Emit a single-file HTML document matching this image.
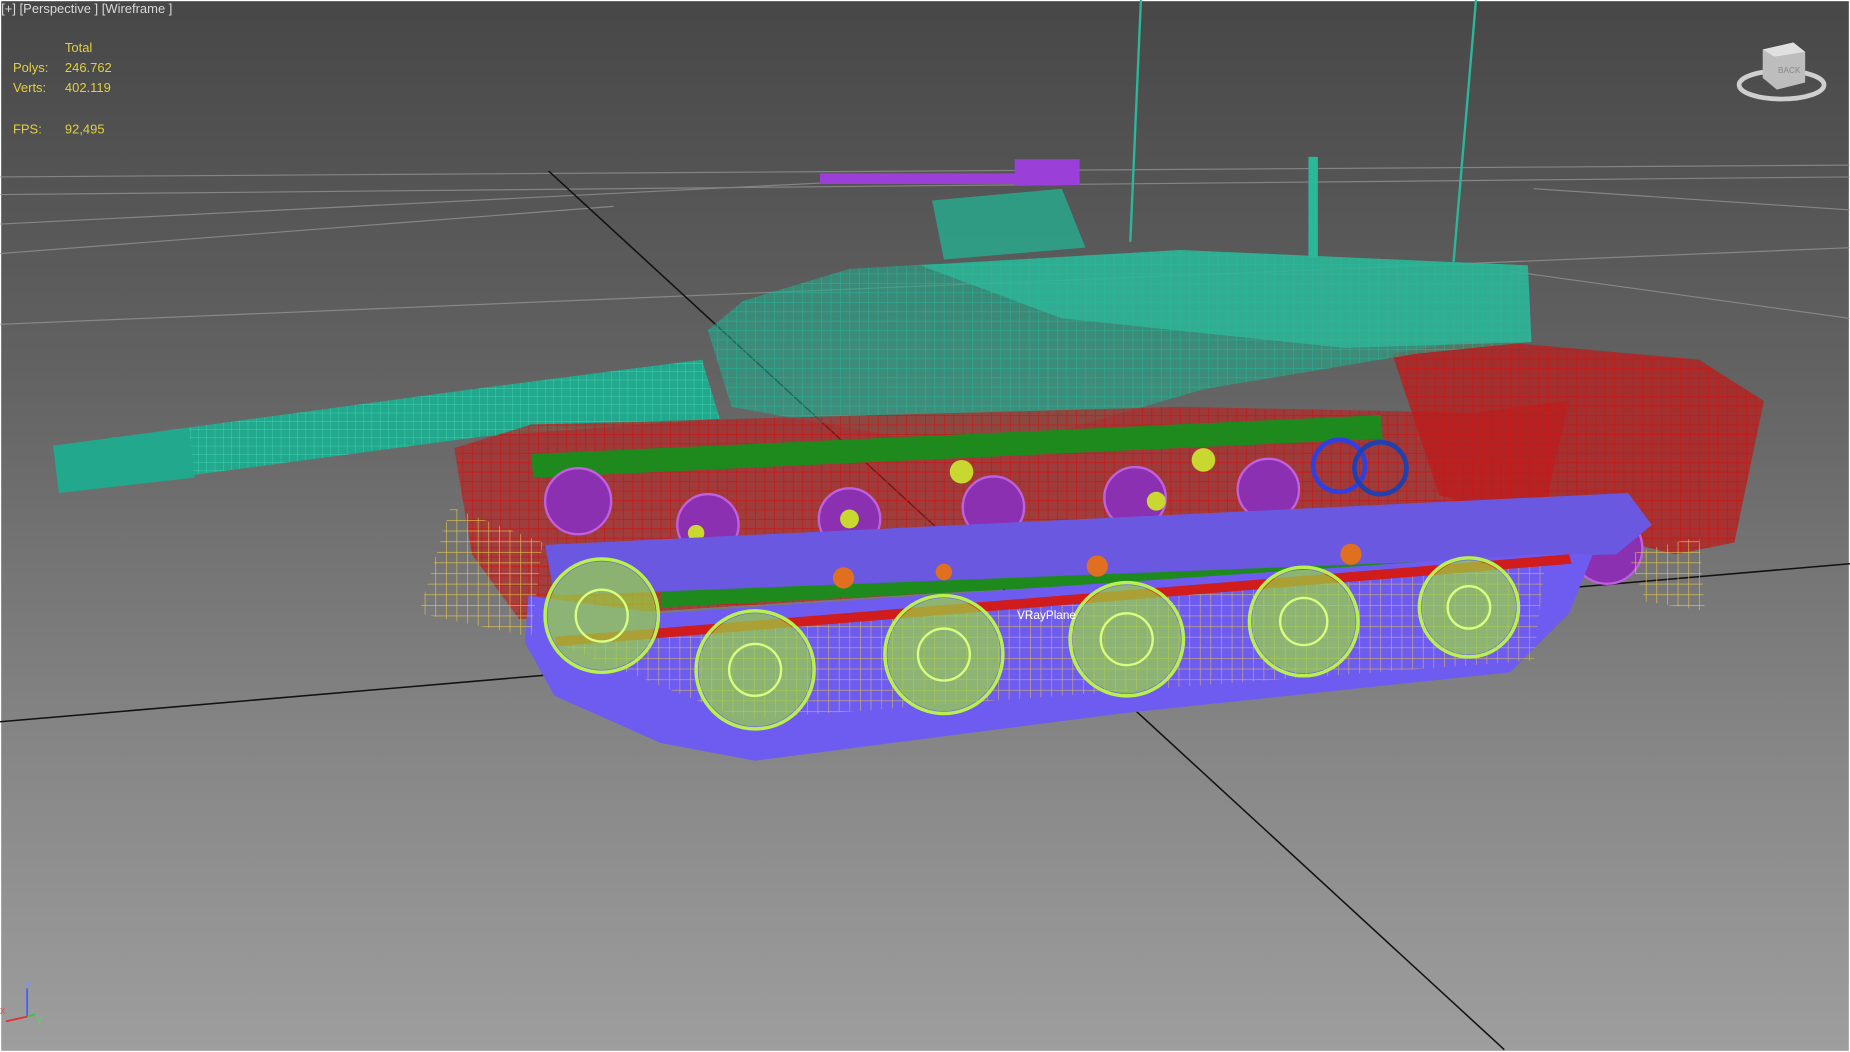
<!DOCTYPE html>
<html><head><meta charset="utf-8"><style>
html,body{margin:0;padding:0;width:1850px;height:1052px;overflow:hidden;background:#6a6a6a}
svg{display:block}
text{font-family:"Liberation Sans",sans-serif}
</style></head><body>
<svg width="1850" height="1052" viewBox="0 0 1568 892" preserveAspectRatio="none" xmlns="http://www.w3.org/2000/svg">
<defs>
<linearGradient id="bg" x1="0" y1="0" x2="0" y2="1">
<stop offset="0" stop-color="#474747"/><stop offset="0.35" stop-color="#626262"/><stop offset="0.7" stop-color="#858585"/><stop offset="1" stop-color="#9e9e9e"/>
</linearGradient>
<pattern id="mesh" width="9" height="9" patternUnits="userSpaceOnUse"><path d="M0 0H9M0 0V9" stroke="#e8c84a" stroke-width="1" fill="none"/></pattern>
<pattern id="tmesh" width="7" height="7" patternUnits="userSpaceOnUse"><rect width="7" height="7" fill="#22a88c"/><path d="M0 0H7M0 0V7" stroke="#40d0b0" stroke-width="0.8"/></pattern>
<pattern id="rmesh" width="8" height="8" patternUnits="userSpaceOnUse"><path d="M0 0H8M0 0V8" stroke="#c81818" stroke-width="1.2" fill="none"/></pattern>
<pattern id="tmesh2" width="8" height="8" patternUnits="userSpaceOnUse"><path d="M0 0H8M0 0V8" stroke="#26b095" stroke-width="1" fill="none"/></pattern>
</defs>
<rect width="1568" height="892" fill="url(#bg)"/>
<rect x="0" y="0" width="1568" height="892" fill="none" stroke="#fff" stroke-width="2"/>
<g stroke="#9a9a9a" stroke-width="1" opacity="0.7">
<line x1="0" y1="150" x2="1568" y2="140"/><line x1="0" y1="165" x2="1568" y2="150"/>
<line x1="0" y1="190" x2="700" y2="155"/><line x1="0" y1="275" x2="1568" y2="210"/>
<line x1="1280" y1="230" x2="1568" y2="270"/><line x1="1300" y1="160" x2="1568" y2="178"/>
<line x1="0" y1="215" x2="520" y2="175"/>
</g>
<g stroke="#111" stroke-width="1.3">
<line x1="465" y1="145" x2="1275" y2="890"/>
<line x1="0" y1="612" x2="1568" y2="478"/>
</g>
<g stroke="#2ab898" stroke-width="2">
<line x1="967" y1="0" x2="958" y2="205"/>
<line x1="1251" y1="0" x2="1232" y2="222"/>
</g>
<rect x="1109" y="133" width="8" height="85" fill="#2ab898"/>
<polygon points="1180,300 1250,288 1440,305 1495,340 1470,460 1420,470 1220,420" fill="#b81e1e" opacity="0.75"/>
<polygon points="1180,300 1250,288 1440,305 1495,340 1470,460 1420,470 1220,420" fill="url(#rmesh)"/>
<polygon points="600,280 630,255 720,228 1000,212 1295,225 1298,290 1200,300 1020,330 900,365 760,370 620,345" fill="#24a88b" opacity="0.6"/>
<polygon points="600,280 630,255 720,228 1000,212 1295,225 1298,290 1200,300 1020,330 900,365 760,370 620,345" fill="url(#tmesh2)"/>
<polygon points="780,225 1000,212 1295,225 1298,290 1140,295 900,270" fill="#2cbc9c" opacity="0.7"/>
<polygon points="790,170 900,160 920,210 800,220" fill="#26ac8e" opacity="0.8"/>
<rect x="695" y="147" width="180" height="9" fill="#9a40d8"/>
<rect x="860" y="135" width="55" height="22" fill="#9a40d8"/>
<polygon points="45,378 400,330 595,305 610,355 410,370 50,418" fill="url(#tmesh)"/>
<polygon points="45,378 160,363 165,405 50,418" fill="#22a88c"/>
<polygon points="385,380 450,360 1000,345 1250,350 1330,340 1300,470 560,518 440,525 400,470" fill="#c01a1a" opacity="0.6"/>
<polygon points="385,380 450,360 1000,345 1250,350 1330,340 1300,470 560,518 440,525 400,470" fill="url(#rmesh)"/>
<polygon points="450,385 1170,352 1172,372 452,405" fill="#1e8a1e"/>
<polygon points="560,495 1200,462 1200,482 560,515" fill="#1e8a1e"/>
<g fill="#8a30b0" stroke="#c060e0" stroke-width="2">
<circle cx="490" cy="425" r="28"/><circle cx="600" cy="445" r="26"/><circle cx="720" cy="440" r="26"/>
<circle cx="842" cy="430" r="26"/><circle cx="962" cy="422" r="26"/><circle cx="1075" cy="415" r="26"/>
<circle cx="1362" cy="465" r="30"/>
</g>
<circle cx="1135" cy="395" r="22" fill="none" stroke="#3040e0" stroke-width="4"/>
<circle cx="1170" cy="397" r="22" fill="none" stroke="#2040b0" stroke-width="4"/>
<g fill="#c8d830"><circle cx="815" cy="400" r="10"/><circle cx="1020" cy="390" r="10"/><circle cx="720" cy="440" r="8"/><circle cx="980" cy="425" r="8"/><circle cx="590" cy="452" r="7"/></g>
<polygon points="462,462 1380,418 1400,445 1370,470 470,505" fill="#6a58e0"/>
<polygon points="448,505 560,520 1300,470 1350,470 1330,520 1280,570 950,605 640,645 560,630 470,590 445,545" fill="#6e5cf0"/>
<polygon points="355,520 382,430 460,460 450,540" fill="url(#mesh)"/>
<polygon points="470,545 1310,475 1300,560 630,610" fill="url(#mesh)" opacity="0.8"/>
<polygon points="1380,470 1440,455 1445,518 1395,510" fill="url(#mesh)"/>
<g fill="#e07020"><circle cx="715" cy="490" r="9"/><circle cx="930" cy="480" r="9"/><circle cx="1145" cy="470" r="9"/><circle cx="800" cy="485" r="7"/></g>
<polygon points="470,540 1330,470 1332,478 472,548" fill="#d01c1c"/>
<g fill="#9ad840" opacity="0.7">
<circle cx="510" cy="522" r="46"/><circle cx="640" cy="568" r="48"/><circle cx="800" cy="555" r="48"/>
<circle cx="955" cy="542" r="46"/><circle cx="1105" cy="527" r="44"/><circle cx="1245" cy="515" r="40"/>
</g>
<g fill="none" stroke="#b8f050" stroke-width="3">
<circle cx="510" cy="522" r="48"/><circle cx="640" cy="568" r="50"/><circle cx="800" cy="555" r="50"/>
<circle cx="955" cy="542" r="48"/><circle cx="1105" cy="527" r="46"/><circle cx="1245" cy="515" r="42"/>
</g>
<g fill="none" stroke="#d8ff80" stroke-width="2">
<circle cx="510" cy="522" r="22"/><circle cx="640" cy="568" r="22"/><circle cx="800" cy="555" r="22"/>
<circle cx="955" cy="542" r="22"/><circle cx="1105" cy="527" r="20"/><circle cx="1245" cy="515" r="18"/>
</g>
<text x="862" y="525" font-size="10" fill="#ffffff">VRayPlane</text>
<text x="1" y="11" font-size="11" fill="#d8d8d8">[+] [Perspective ] [Wireframe ]</text>
<g font-size="11" fill="#e0d040">
<text x="55" y="44">Total</text>
<text x="11" y="61">Polys:</text><text x="55" y="61">246.762</text>
<text x="11" y="78">Verts:</text><text x="55" y="78">402.119</text>
<text x="11" y="113">FPS:</text><text x="55" y="113">92,495</text>
</g>
<ellipse cx="1510" cy="72" rx="36" ry="12" fill="none" stroke="#cfcfcf" stroke-width="4"/>
<polygon points="1494,42 1520,36 1530,44 1530,70 1506,76 1494,66" fill="#bdbdbd"/>
<polygon points="1494,42 1520,36 1530,44 1504,48" fill="#e0e0e0"/>
<text x="1507" y="62" font-size="7" fill="#888">BACK</text>
<line x1="23" y1="838" x2="23" y2="862" stroke="#4060ff" stroke-width="1.5"/>
<line x1="23" y1="862" x2="5" y2="866" stroke="#e03030" stroke-width="1.5"/>
<line x1="23" y1="862" x2="30" y2="860" stroke="#40c040" stroke-width="1.5"/>
<text x="22" y="835" font-size="9" fill="#8090ff">z</text>
<text x="31" y="867" font-size="9" fill="#60d060">y</text>
<text x="0" y="860" font-size="9" fill="#e05050">x</text>
</svg>
</body></html>
